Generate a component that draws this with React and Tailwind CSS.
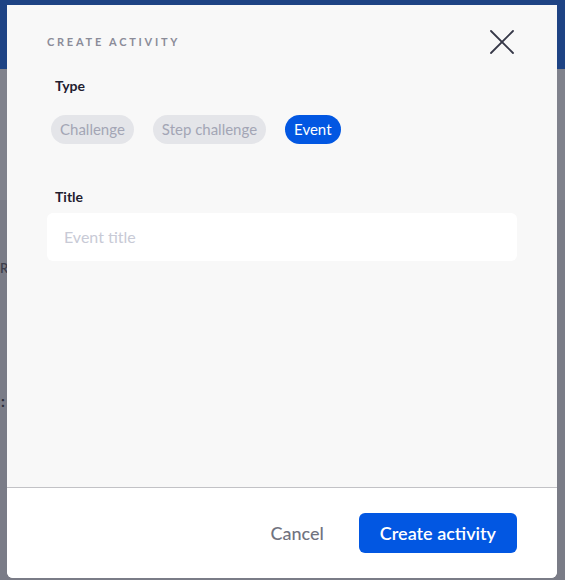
import React from "react";

const types = ["Challenge", "Step challenge", "Event"];

const App = () => {
  const selected = "Event";
  return (
    <div className="relative w-[565px] h-[580px] overflow-hidden bg-[#7a7c87] font-['Lato',sans-serif]">
      {/* page behind the overlay */}
      <div className="h-[69px] bg-[#1e4384]" />
      <div className="h-[131px] bg-[#80828c]" />
      <span className="absolute left-0 top-[259px] text-[13px] font-semibold text-[#3d3f4c]">R.</span>
      <span className="absolute left-[1px] top-[390px] text-[15px] font-bold text-[#2a2c38]">:</span>

      {/* modal */}
      <div className="absolute left-[7px] top-[5px] w-[550px] h-[573px] flex flex-col bg-[#f8f8f8] rounded-b-md overflow-hidden">
        <div className="flex-1 pl-10 pr-[43px] pt-[25px]">
          <div className="flex items-center justify-between h-[24px]">
            <h2 className="text-[11px] font-bold tracking-[0.25em] text-[#8b8c98] mt-[1px]">CREATE ACTIVITY</h2>
            <button className="w-[24px] h-[24px] text-[#363848]">
              <svg viewBox="0 0 24 24" width="24" height="24" fill="none" stroke="currentColor" strokeWidth="1.8" strokeLinecap="round">
                <line x1="1" y1="1" x2="23" y2="23" />
                <line x1="23" y1="1" x2="1" y2="23" />
              </svg>
            </button>
          </div>

          <div className="mt-[23px] pl-2 text-[14px] font-bold text-[#1f2030] leading-[18px]">Type</div>
          <div className="mt-[20px] ml-1 flex gap-[19px]">
            {types.map((t) =>
              t === selected ? (
                <button key={t} className="h-[29px] px-[9px] rounded-full bg-[#0257e2] text-white text-[15px]">
                  {t}
                </button>
              ) : (
                <button key={t} className="h-[29px] px-[9px] rounded-full bg-[#e4e5e9] text-[#a3a5b5] text-[15px]">
                  {t}
                </button>
              )
            )}
          </div>

          <div className="mt-[44px] pl-2 text-[14px] font-bold text-[#1f2030] leading-[18px]">Title</div>
          <div className="mt-[7px] mr-[-3px] h-[48px] rounded-md bg-white flex items-center px-[17px]">
            <input
              className="w-full bg-transparent outline-none text-[16px] text-[#1f2030] placeholder:text-[#c8cad6]"
              placeholder="Event title"
            />
          </div>
        </div>

        <div className="h-[91px] border-t border-[#c2c2c6] bg-white flex items-center justify-end gap-[35px] pr-10">
          <button className="text-[18px] font-medium text-[#71737f]">Cancel</button>
          <button className="h-[40px] px-[21px] rounded-md bg-[#0257e2] text-white text-[18px] font-semibold">
            Create activity
          </button>
        </div>
      </div>
    </div>
  );
};

export default App;
